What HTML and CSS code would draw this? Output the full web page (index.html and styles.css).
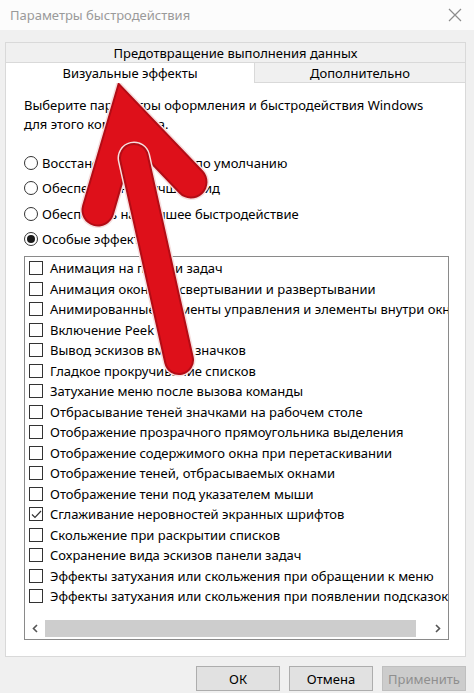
FILE: index.html
```html
<!DOCTYPE html>
<html lang="ru">
<head>
    <meta charset="utf-8">
    <title>Параметры быстродействия</title>
    <link rel="stylesheet" href="styles.css">
</head>
<body>

    <div class="window">
        <div class="titlebar">
            <span class="title">Параметры быстродействия</span>
            <svg class="close" width="14" height="14" viewBox="0 0 14 14">
                <path d="M1 1 L13 13 M13 1 L1 13" stroke="#8c8c8c" stroke-width="1.2" fill="none"/>
            </svg>
        </div>

        <div class="dialog">
            <!-- Tabs -->
            <div class="tab-row">
                <div class="tab wide">Предотвращение выполнения данных</div>
            </div>
            <div class="tab-row">
                <div class="tab active">Визуальные эффекты</div>
                <div class="tab">Дополнительно</div>
            </div>

            <div class="panel">
                <p class="intro">Выберите параметры оформления и быстродействия Windows для этого компьютера.</p>

                <div class="radio-row"><span class="radio"></span>Восстановить значения по умолчанию</div>
                <div class="radio-row"><span class="radio"></span>Обеспечить наилучший вид</div>
                <div class="radio-row"><span class="radio"></span>Обеспечить наилучшее быстродействие</div>
                <div class="radio-row"><span class="radio checked"></span>Особые эффекты:</div>

                <div class="listbox">
                    <div class="items">
                        <div class="item"><span class="check"></span>Анимация на панели задач</div>
                        <div class="item"><span class="check"></span>Анимация окон при свертывании и развертывании</div>
                        <div class="item"><span class="check"></span>Анимированные элементы управления и элементы внутри окна</div>
                        <div class="item"><span class="check"></span>Включение Peek</div>
                        <div class="item"><span class="check"></span>Вывод эскизов вместо значков</div>
                        <div class="item"><span class="check"></span>Гладкое прокручивание списков</div>
                        <div class="item"><span class="check"></span>Затухание меню после вызова команды</div>
                        <div class="item"><span class="check"></span>Отбрасывание теней значками на рабочем столе</div>
                        <div class="item"><span class="check"></span>Отображение прозрачного прямоугольника выделения</div>
                        <div class="item"><span class="check"></span>Отображение содержимого окна при перетаскивании</div>
                        <div class="item"><span class="check"></span>Отображение теней, отбрасываемых окнами</div>
                        <div class="item"><span class="check"></span>Отображение тени под указателем мыши</div>
                        <div class="item"><span class="check checked"><svg width="11" height="9" viewBox="0 0 11 9"><path d="M1 4.5 L4 7.5 L10 1" stroke="#333" stroke-width="1.2" fill="none"/></svg></span>Сглаживание неровностей экранных шрифтов</div>
                        <div class="item"><span class="check"></span>Скольжение при раскрытии списков</div>
                        <div class="item"><span class="check"></span>Сохранение вида эскизов панели задач</div>
                        <div class="item"><span class="check"></span>Эффекты затухания или скольжения при обращении к меню</div>
                        <div class="item"><span class="check"></span>Эффекты затухания или скольжения при появлении подсказок</div>
                    </div>
                    <div class="hscroll">
                        <span class="arrow">
                            <svg width="6" height="9" viewBox="0 0 6 9"><path d="M5 1 L1.5 4.5 L5 8" stroke="#555" stroke-width="1.6" fill="none"/></svg>
                        </span>
                        <span class="thumb"></span>
                        <span class="arrow">
                            <svg width="6" height="9" viewBox="0 0 6 9"><path d="M1 1 L4.5 4.5 L1 8" stroke="#555" stroke-width="1.6" fill="none"/></svg>
                        </span>
                    </div>
                </div>
            </div>

            <div class="buttons">
                <button>ОК</button>
                <button>Отмена</button>
                <button class="disabled">Применить</button>
            </div>
        </div>
    </div>

    <!-- Red annotation arrow over the dialog -->
    <svg class="annotation" width="474" height="693" viewBox="0 0 474 693">
        <g fill="none" stroke-linecap="round" stroke-linejoin="miter" stroke-miterlimit="10">
            <polyline points="98,210 126,114 191,182" stroke="#f6dede" stroke-width="36"/>
            <polyline points="98,210 126,114 191,182" stroke="#b30c15" stroke-width="33"/>
            <polyline points="98,210 126,114 191,182" stroke="#de101a" stroke-width="29"/>
            <line x1="134" y1="158" x2="179" y2="360" stroke="#f6dede" stroke-width="33"/>
            <line x1="134" y1="158" x2="179" y2="360" stroke="#b30c15" stroke-width="30"/>
            <line x1="134" y1="158" x2="179" y2="360" stroke="#de101a" stroke-width="26"/>
        </g>
    </svg>

</body>
</html>
```

FILE: styles.css
```css
* {
    margin: 0;
    padding: 0;
    box-sizing: border-box;
}

body {
    font-family: 'Noto Sans', 'Open Sans', sans-serif;
    background-color: #f0f0f0;
    width: 474px;
    height: 693px;
    overflow: hidden;
    position: relative;
    color: #000;
}

/* Title bar */
.titlebar {
    height: 30px;
    background-color: #fcfcfc;
    display: flex;
    align-items: center;
    justify-content: space-between;
    padding: 0 12px 0 10px;
}

.title {
    font-size: 13px;
    color: #9a9a9a;
}

/* Dialog body */
.dialog {
    padding: 12px 8px 0 5px;
}

.tab-row {
    display: flex;
    height: 20px;
}

.tab {
    flex: 1;
    display: flex;
    align-items: center;
    justify-content: center;
    font-size: 13px;
    background-color: #f0f0f0;
    border: 1px solid #d9d9d9;
    border-bottom: none;
}

.tab.wide {
    padding-top: 1px;
}

.tab.active {
    flex: 0 0 250px;
    background-color: #fff;
    height: 21px;
    position: relative;
    z-index: 1;
}

.tab-row .tab + .tab {
    border-left: none;
    border-bottom: 1px solid #d9d9d9;
    height: 21px;
}

.panel {
    background-color: #fff;
    border: 1px solid #d9d9d9;
    height: 575px;
    padding: 13px 16px 0 18px;
}

.intro {
    font-size: 13px;
    line-height: 19px;
    margin-bottom: 16px;
    padding-right: 4px;
}

.radio-row {
    display: flex;
    align-items: center;
    height: 25.5px;
    font-size: 13px;
}

.radio {
    width: 14px;
    height: 14px;
    border: 1px solid #333;
    border-radius: 50%;
    margin-right: 4px;
    display: flex;
    align-items: center;
    justify-content: center;
}

.radio.checked::after {
    content: '';
    width: 8px;
    height: 8px;
    border-radius: 50%;
    background-color: #1a1a1a;
}

/* List of effects */
.listbox {
    margin-top: 4px;
    height: 384px;
    border: 1px solid #8a8a8a;
    display: flex;
    flex-direction: column;
    overflow: hidden;
}

.items {
    flex: 1;
    padding-top: 1px;
    white-space: nowrap;
    overflow: hidden;
}

.item {
    display: flex;
    align-items: center;
    height: 20.5px;
    font-size: 13px;
    padding-left: 4px;
}

.check {
    flex: 0 0 14px;
    width: 14px;
    height: 14px;
    border: 1px solid #333;
    margin-right: 7px;
    display: flex;
    align-items: center;
    justify-content: center;
}

.hscroll {
    height: 17px;
    margin-bottom: 2px;
    display: flex;
    align-items: center;
}

.arrow {
    width: 20px;
    height: 17px;
    display: flex;
    align-items: center;
    justify-content: center;
}

.thumb {
    flex: 1;
    height: 17px;
    background-color: #cdcdcd;
    margin-right: 12px;
}

/* Dialog buttons */
.buttons {
    display: flex;
    justify-content: flex-end;
    gap: 9px;
    padding-top: 9px;
}

button {
    width: 84px;
    height: 25px;
    font-family: inherit;
    font-size: 13px;
    background-color: #e1e1e1;
    border: 1px solid #adadad;
    color: #000;
}

button.disabled {
    background-color: #cccccc;
    border-color: #bfbfbf;
    color: #8f8f8f;
}

/* Annotation arrow */
.annotation {
    position: absolute;
    left: 0;
    top: 0;
    pointer-events: none;
}
```
